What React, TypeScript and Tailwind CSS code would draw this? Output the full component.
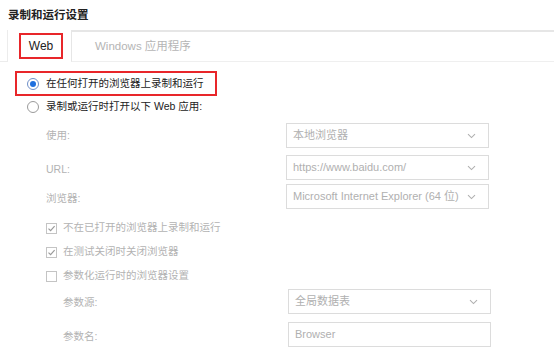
import React from 'react';

const font = { fontFamily: '"Liberation Sans", "Noto Sans CJK SC", sans-serif' };

const Chevron = () => (
  <svg width="9" height="6" viewBox="0 0 9 6" className="shrink-0">
    <path d="M1 1.2 L4.5 4.6 L8 1.2" fill="none" stroke="#b0b0b0" strokeWidth="1.1" />
  </svg>
);

const Select = ({ value, arrow = true, width = 'w-[203px]' }: { value: string; arrow?: boolean; width?: string }) => (
  <div className={`${width} h-[25px] border border-[#dcdcdc] flex items-center justify-between pl-[6px] pr-[12px] text-[11px] text-[#b0b0b0]`}>
    <span>{value}</span>
    {arrow && <Chevron />}
  </div>
);

const Check = ({ checked, label }: { checked: boolean; label: string }) => (
  <div className="h-[20px] flex items-center pl-[46px]">
    <div className="w-[11px] h-[11px] border border-[#c4c4c4] flex items-center justify-center">
      {checked && (
        <svg width="9" height="9" viewBox="0 0 9 9">
          <path d="M1.5 4.6 L3.6 6.6 L7.6 2.2" fill="none" stroke="#9a9a9a" strokeWidth="1.2" />
        </svg>
      )}
    </div>
    <span className="ml-[6px] text-[10.5px] text-[#b3b3b3]">{label}</span>
  </div>
);

export default function App() {
  return (
    <div className="w-[554px] h-[354px] bg-white overflow-hidden" style={font}>
      {/* title */}
      <div className="h-[30px] pl-[8px] pt-[7px] text-[11.5px] font-semibold text-[#222]">录制和运行设置</div>

      {/* tabs */}
      <div className="flex h-[32px]">
        <div className="w-[7px] border-b border-[#ececec]" />
        <div className="w-[64px] border-l border-[#ececec] flex items-center pl-[11px]">
          <div className="w-[44px] h-[26px] border-2 border-[#e8262a] flex items-center justify-center text-[12px] text-[#222]">
            Web
          </div>
        </div>
        <div className="flex-1 border-t-2 border-b border-l border-[#e6e6e6] border-b-[#efefef] flex items-center pl-[23px] text-[11.5px] text-[#b5b5b5]">
          Windows 应用程序
        </div>
      </div>

      {/* radio: any browser */}
      <div className="mt-[9px] ml-[15px] w-[202px] h-[25px] border-2 border-[#e8262a] flex items-center pl-[10px]">
        <div className="w-[12px] h-[12px] rounded-full border border-[#6f8fc8] flex items-center justify-center">
          <div className="w-[6px] h-[6px] rounded-full bg-[#1f6fde]" />
        </div>
        <span className="ml-[7px] text-[10.5px] text-[#222]">在任何打开的浏览器上录制和运行</span>
      </div>

      {/* radio: open web app */}
      <div className="mt-[1px] h-[20px] pl-[27px] flex items-center">
        <div className="w-[12px] h-[12px] rounded-full border border-[#9a9a9a]" />
        <span className="ml-[7px] text-[10.5px] text-[#222]">录制或运行时打开以下 Web 应用:</span>
      </div>

      <div className="mt-[6px] flex items-center pl-[46px]">
        <span className="w-[240px] text-[10.5px] text-[#b3b3b3] pt-[1px]">使用:</span>
        <Select value="本地浏览器" />
      </div>
      <div className="mt-[7px] flex items-center pl-[46px]">
        <span className="w-[240px] text-[10.5px] text-[#b3b3b3] pt-[4px]">URL:</span>
        <Select value="https://www.baidu.com/" />
      </div>
      <div className="mt-[4px] flex items-center pl-[46px]">
        <span className="w-[240px] text-[10.5px] text-[#b3b3b3] pt-[4px]">浏览器:</span>
        <Select value="Microsoft Internet Explorer (64 位)" />
      </div>

      <div className="mt-[9px] flex flex-col gap-[4px]">
        <Check checked label="不在已打开的浏览器上录制和运行" />
        <Check checked label="在测试关闭时关闭浏览器" />
        <Check checked={false} label="参数化运行时的浏览器设置" />
      </div>

      <div className="mt-[3px] flex items-center pl-[63px]">
        <span className="w-[225px] text-[10.5px] text-[#b3b3b3] pt-[2px]">参数源:</span>
        <Select value="全局数据表" />
      </div>
      <div className="mt-[8px] flex items-center pl-[63px]">
        <span className="w-[225px] text-[10.5px] text-[#b3b3b3] pt-[4px]">参数名:</span>
        <Select value="Browser" arrow={false} />
      </div>
    </div>
  );
}
